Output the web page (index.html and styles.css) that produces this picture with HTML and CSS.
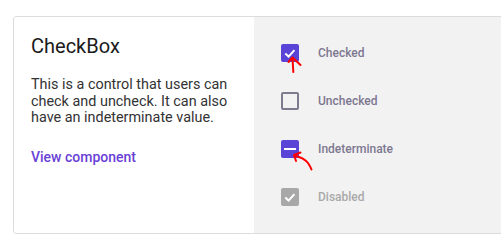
FILE: index.html
```html
<!DOCTYPE html>
<html lang="en">
<head>
  <meta charset="UTF-8" />
  <title>CheckBox</title>
  <link rel="stylesheet" href="styles.css">
</head>
<body>

  <div class="card">
    <div class="info">
      <h2>CheckBox</h2>
      <p>This is a control that users can check and uncheck. It can also have an indeterminate value.</p>
      <a href="#">View component</a>
    </div>

    <div class="demo">
      <div class="row">
        <span class="box checked">
          <svg viewBox="0 0 18 18" width="18" height="18"><path d="M4.3 9.6 L7.6 12.6 L13.4 6.2" fill="none" stroke="#fff" stroke-width="2"/></svg>
        </span>
        <span class="label">Checked</span>
      </div>
      <div class="row">
        <span class="box"></span>
        <span class="label">Unchecked</span>
      </div>
      <div class="row">
        <span class="box checked">
          <svg viewBox="0 0 18 18" width="18" height="18"><rect x="3" y="8" width="12" height="2" fill="#fff"/></svg>
        </span>
        <span class="label">Indeterminate</span>
      </div>
      <div class="row disabled">
        <span class="box checked">
          <svg viewBox="0 0 18 18" width="18" height="18"><path d="M4.3 9.6 L7.6 12.6 L13.4 6.2" fill="none" stroke="#fff" stroke-width="2"/></svg>
        </span>
        <span class="label">Disabled</span>
      </div>
    </div>
  </div>

  <!-- hand-drawn red arrows on top of the screenshot -->
  <svg class="marks" width="501" height="245" viewBox="0 0 501 245">
    <g fill="none" stroke="#f00" stroke-width="2" stroke-linecap="round" stroke-linejoin="round">
      <path d="M292.5 58 L293.3 72"/>
      <path d="M288.5 62 L292.5 57.5 L300.5 65"/>
      <path d="M300.5 152.5 L294 155 L296 161"/>
      <path d="M294.5 155.5 C300 157 305 159 308 163 C310 166 311 168 311.5 169.5"/>
    </g>
  </svg>

</body>
</html>
```

FILE: styles.css
```css
* {
  margin: 0;
  padding: 0;
  box-sizing: border-box;
}

body {
  background: #fff;
  font-family: Roboto, "Liberation Sans", sans-serif;
  width: 501px;
  height: 245px;
  overflow: hidden;
  position: relative;
  padding: 16px 0 0 13px;
}

.card {
  display: flex;
  width: 488px;
  height: 218px;
  border: 1px solid #dcdcdc;
  border-right: none;
  border-radius: 4px 0 0 4px;
  overflow: hidden;
}

.info {
  width: 240px;
  flex-shrink: 0;
  padding: 17px 17px 0 17px;
  background: #fff;
}

.info h2 {
  font-size: 20px;
  font-weight: 400;
  color: #1b1b1b;
  line-height: 24px;
  margin-bottom: 19px;
}

.info p {
  font-size: 14.4px;
  line-height: 16.5px;
  color: #333;
  margin-bottom: 20px;
}

.info a {
  font-size: 14px;
  font-weight: 500;
  color: #6a3fd6;
  text-decoration: none;
}

.demo {
  flex-grow: 1;
  background: #f2f2f2;
  padding: 27px 0 0 27px;
  display: flex;
  flex-direction: column;
  gap: 30px;
}

.row {
  display: flex;
  align-items: center;
  gap: 19px;
  height: 18px;
}

.box {
  width: 18px;
  height: 18px;
  border: 2px solid #7f7b8e;
  border-radius: 2px;
  display: flex;
  align-items: center;
  justify-content: center;
  flex-shrink: 0;
}

.box.checked {
  background: #5a43d7;
  border: none;
}

.label {
  font-size: 12px;
  font-weight: 500;
  color: #7d7890;
}

.disabled .box.checked {
  background: #a8a8a8;
}

.disabled .label {
  color: #a9a9a9;
}

.marks {
  position: absolute;
  left: 0;
  top: 0;
  pointer-events: none;
}
```
